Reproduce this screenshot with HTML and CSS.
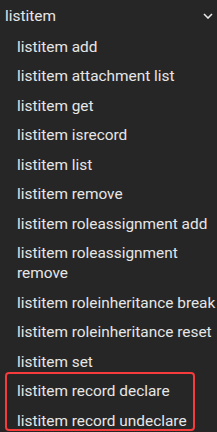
FILE: index.html
```html
<!DOCTYPE html>
<html>
<head>
<meta charset="utf-8">
<title>listitem</title>
<link rel="stylesheet" href="styles.css">
</head>
<body>
<div class="nav">
	<div class="group">
		<span class="group-title">listitem</span>
		<svg class="chevron" width="10" height="6" viewBox="0 0 10 6"><path d="M1 1l4 4 4-4" fill="none" stroke="#e6e6e6" stroke-width="1.6"/></svg>
	</div>
	<ul class="items">
		<li>listitem add</li>
		<li>listitem attachment list</li>
		<li>listitem get</li>
		<li>listitem isrecord</li>
		<li>listitem list</li>
		<li>listitem remove</li>
		<li>listitem roleassignment add</li>
		<li>listitem roleassignment remove</li>
		<li>listitem roleinheritance break</li>
		<li>listitem roleinheritance reset</li>
		<li>listitem set</li>
		<li>listitem record declare</li>
		<li>listitem record undeclare</li>
	</ul>
	<!-- 标注框 -->
	<div class="mark"></div>
</div>
</body>
</html>
```
FILE: styles.css
```css
*{ margin:0; padding:0;}
body{ background:#262626; color:#e6e6e6; font:15.4px/20px Roboto,"Liberation Sans",sans-serif; overflow:hidden;}
li{ list-style:none;}
.nav{ position:relative; width:217px;}
.group{ display:flex; align-items:center; justify-content:space-between; height:32px; padding:0 5px 0 5px;}
.chevron{ display:block; margin-right:-1px;}
.items{ padding-left:17px;}
.items li{ padding:4.75px 0; width:200px; white-space:normal;}
.mark{ position:absolute; left:5px; top:372px; width:186px; height:55px; border:2px solid #f53b3b; border-radius:4px;}
```
